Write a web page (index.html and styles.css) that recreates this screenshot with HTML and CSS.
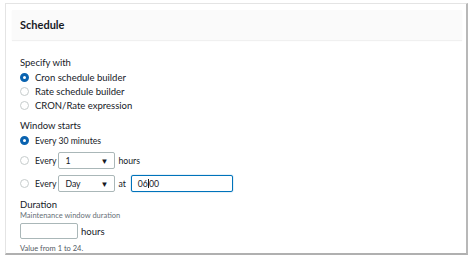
FILE: index.html
```html
<!DOCTYPE html>
<html lang="en">
<head>
  <meta charset="UTF-8" />
  <title>Schedule</title>
  <link rel="stylesheet" href="styles.css">
</head>
<body>
  <div class="card">
    <header class="card-head">Schedule</header>
    <div class="card-body">
      <!-- Specify with -->
      <div class="field-label">Specify with</div>
      <div class="radio-list">
        <div class="radio-row"><span class="radio checked"></span>Cron schedule builder</div>
        <div class="radio-row"><span class="radio"></span>Rate schedule builder</div>
        <div class="radio-row"><span class="radio"></span>CRON/Rate expression</div>
      </div>

      <!-- Window starts -->
      <div class="field-label gap">Window starts</div>
      <div class="window">
        <div class="radio-row"><span class="radio checked"></span>Every 30 minutes</div>
        <div class="radio-row inputs first">
          <span class="radio"></span>Every
          <div class="select">1<span class="caret">&#9660;</span></div>
          <span>hours</span>
        </div>
        <div class="radio-row inputs">
          <span class="radio"></span>Every
          <div class="select">Day<span class="caret">&#9660;</span></div>
          <span>at</span>
          <div class="text-input focused">06<span class="cursor"></span>00</div>
        </div>
      </div>

      <!-- Duration -->
      <div class="field-label dur">Duration</div>
      <div class="hint">Maintenance window duration</div>
      <div class="dur-row">
        <div class="text-input small"></div>
        <span>hours</span>
      </div>
      <div class="hint after">Value from 1 to 24.</div>
    </div>
  </div>
</body>
</html>
```

FILE: styles.css
```css
body {
  margin: 0;
  background: #fff;
  font-family: 'Lato', 'Open Sans', sans-serif;
  font-size: 9.5px;
  color: #16191f;
}
.card {
  margin: 3px 0 0 5px;
  width: 463px;
  height: 252px;
  box-sizing: border-box;
  border: 1px solid #e4e4e4;
  border-right: 2px solid #b8b8b8;
  border-bottom: 2px solid #b0b0b0;
  padding: 6px 4px 0 6px;
}
.card-head {
  height: 30px;
  background: #fafafa;
  box-shadow: 0 1px 1px rgba(0, 0, 0, 0.06);
  font-weight: 700;
  font-size: 11px;
  line-height: 30px;
  padding-left: 8px;
}
.card-body {
  padding: 16px 0 0 8px;
}
.field-label {
  line-height: 14px;
}
.field-label.gap {
  margin-top: 7px;
}
.window {
  font-size: 8.7px;
}
.radio-row {
  display: flex;
  align-items: center;
  height: 14px;
}
.radio {
  width: 7px;
  height: 7px;
  border: 1px solid #c6cccc;
  border-radius: 50%;
  margin-right: 6px;
  flex: none;
}
.radio.checked {
  width: 3px;
  height: 3px;
  border: 3px solid #0a63b0;
  background: #fff;
}
.radio-row.inputs {
  height: 17px;
  margin-top: 6px;
}
.radio-row.inputs.first {
  margin-top: 5px;
}
.radio-row.inputs > span:not(.radio) {
  margin-left: 3px;
}
.select {
  box-sizing: border-box;
  width: 57px;
  height: 17px;
  margin-left: 2px;
  border: 1px solid #aab7b8;
  border-radius: 2px;
  padding: 0 6px;
  display: flex;
  align-items: center;
  justify-content: space-between;
}
.caret {
  font-size: 8px;
  color: #16191f;
}
.text-input {
  box-sizing: border-box;
  height: 17px;
  border: 1px solid #aab7b8;
  border-radius: 2px;
  padding: 0 6px;
  display: flex;
  align-items: center;
}
.text-input.focused {
  width: 102px;
  margin-left: 5px;
  border-color: #0073bb;
  box-shadow: 0 0 1px #0073bb;
}
.cursor {
  display: inline-block;
  width: 1px;
  height: 9px;
  background: #16191f;
}
.field-label.dur {
  margin-top: 7px;
  line-height: 12px;
}
.hint {
  font-size: 7.5px;
  color: #687078;
  line-height: 9px;
}
.hint.after {
  margin-top: 5px;
  color: #545b64;
}
.dur-row {
  display: flex;
  align-items: center;
  gap: 3px;
  margin-top: 3px;
}
.text-input.small {
  width: 58px;
  height: 16px;
}
```
